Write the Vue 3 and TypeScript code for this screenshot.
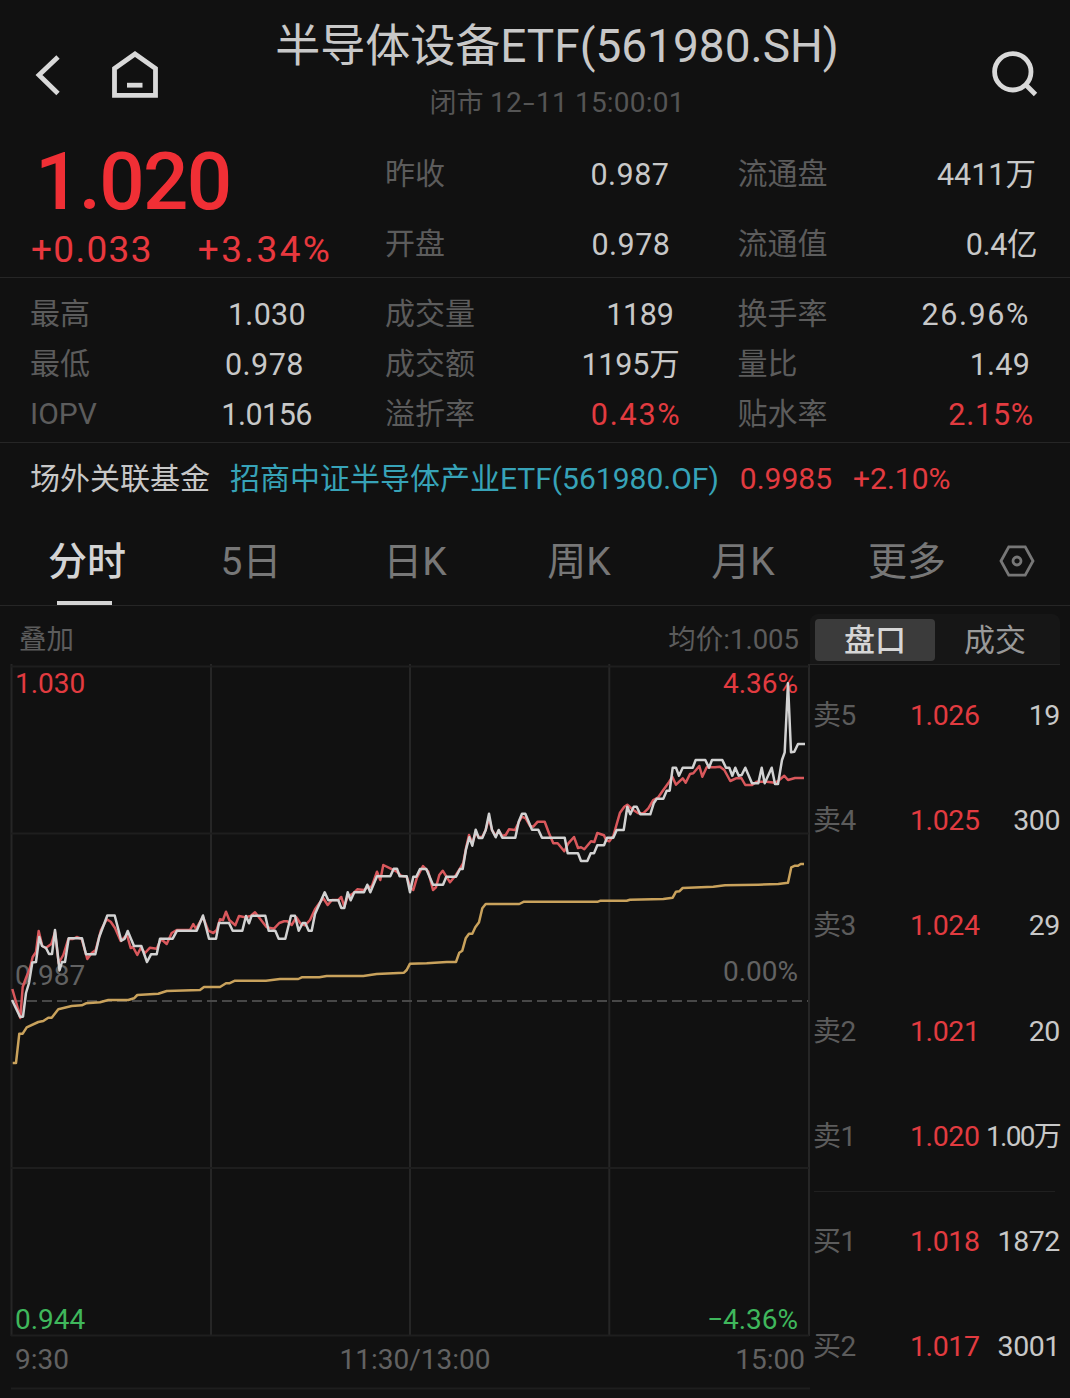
<script setup lang="ts">
interface Quote {
  label: string
  value: string
  /** distance between the value and the right edge of its column */
  inset: number
  /** letter spacing of the value */
  track: number
  up?: boolean
}

interface Order {
  label: string
  price: string
  volume: string
}

const summary: Quote[] = [
  { label: '昨收', value: '0.987', inset: 68, track: 0.5 },
  { label: '流通盘', value: '4411万', inset: 34, track: 0 },
  { label: '开盘', value: '0.978', inset: 67, track: 0.5 },
  { label: '流通值', value: '0.4亿', inset: 33, track: -0.4 },
]

const stats: Quote[] = [
  { label: '最高', value: '1.030', inset: 79, track: 0.3 },
  { label: '成交量', value: '1189', inset: 64, track: -0.3 },
  { label: '换手率', value: '26.96%', inset: 40, track: 1.6 },
  { label: '最低', value: '0.978', inset: 81, track: 0.5 },
  { label: '成交额', value: '1195万', inset: 58, track: -0.2 },
  { label: '量比', value: '1.49', inset: 40, track: 0.2 },
  { label: 'IOPV', value: '1.0156', inset: 73, track: -0.5 },
  { label: '溢折率', value: '0.43%', inset: 56, track: 1.8, up: true },
  { label: '贴水率', value: '2.15%', inset: 36, track: 0.8, up: true },
]

const tabs: string[] = ['分时', '5日', '日K', '周K', '月K', '更多']

const sells: Order[] = [
  { label: '卖5', price: '1.026', volume: '19' },
  { label: '卖4', price: '1.025', volume: '300' },
  { label: '卖3', price: '1.024', volume: '29' },
  { label: '卖2', price: '1.021', volume: '20' },
  { label: '卖1', price: '1.020', volume: '1.00万' },
]

const buys: Order[] = [
  { label: '买1', price: '1.018', volume: '1872' },
  { label: '买2', price: '1.017', volume: '3001' },
]

const priceLine =
  '12,1000 20,1016.7 23,1016.7 26,993 29,983 32.3,962.5 36,962 39.3,937 42,946 46,948 49,954 52,954 55,930 59.5,970.5 62,962 65,962 68.7,938.3 82,938.3 86,954.3 95.3,954.3 99.3,936.7 107.3,915.5 114.7,915.5 121.3,940.7 124.5,939 127.7,931 134,946 141.3,946 147,962 151,954.3 156.7,954.3 160,938.7 172.7,938.7 177,930.7 196.7,930.7 203,915.5 209,938.7 216,938.7 219,923 229,923 232.7,930.7 242.3,930.7 246,916 249,923.3 251.7,915.7 265.3,915.7 268.7,930.7 275.3,930.7 278.7,938.7 285.3,938.7 291,915.7 295,915.7 298.7,930.7 302.7,923 305.3,923 308.7,930.7 311.7,930.7 315,914 324.7,892.3 328.3,900.3 338.3,900.3 341.3,908 344.3,908 347.7,892.3 350.7,900.3 354.3,892.3 364,892.3 367.3,884.7 370.3,892.3 377,876.3 390.3,876.3 393.7,868.7 397,868.7 399.7,876.3 406.7,876.3 410,892.3 413.3,876.7 416.3,876.7 420,869 426.3,869 433,884.7 443,884.7 446.3,876.7 456,876.7 460,869 462.7,869 466,849.3 469.3,837.3 472.3,845.7 475.7,829.7 478.7,838 482.3,838 485.7,830 489,813.7 492,830 495.7,837.3 498.7,830 502.3,837.7 515.3,837.7 518.7,821.7 522,813.7 525.3,813.7 532,829.7 538.3,829.7 542,837.7 564.7,837.7 567.7,853.3 578,853.3 581,861 587.3,861 590.7,853.3 594,853.3 597.3,845.3 604,845.3 607,837.7 613.3,837.7 616.7,830 623.7,830 627.3,806.7 630.3,814.3 633.7,806.7 636.7,806.7 640.3,814.3 650.3,814.3 653.7,803.3 656.7,798.7 663.3,798.7 666.7,790.7 669.7,790.7 672.7,767.7 676,767.7 679,775.7 682.7,767.7 692.7,767.7 695.7,760 705.3,760 709,767.7 712,760 722.3,760 726,767.7 729.3,767.7 732.3,775.7 735.3,767.7 738.7,775.7 741.7,775 745.3,767.7 752,783.3 758.3,783.3 761.7,767.7 764.7,783.3 771.7,767.7 775,784 778,784 782,760 784.7,752.3 788,683.3 791,752.3 794.3,751.7 798,744 805,744'

const indexLine =
  '12.3,989 18.3,1010 20.3,1018 22.7,987 26,978 30,968 32.7,957 36,952 38.7,931 42.3,946 45.7,948 51.3,944 55,932 58.7,963 63.3,955 68.3,939 73,939 76.7,937 81.7,939 87.3,959 91.7,953 95.7,950 101,930 106.7,919.3 110.7,921.7 115,928 120.7,941 127,935 130.7,948 133,947 137.3,955 140.7,948 145,953 150,947.7 156.7,948.7 161,939 166.7,944 171.7,933 176.7,930 190,930 193.3,924 196,929 203,917 208.3,930.7 213.3,933 216.7,930 220,919.3 223,920 226,911.7 229.3,920 235.3,925.3 239,916 245,917.3 250.7,916 255,912.3 266.7,927.3 274,928.7 279.3,923 284,921.3 287.3,921.3 291.7,925 296.3,917.3 300.3,923.3 305,925.3 310,920 315,909.3 319.3,903.3 323.3,898.3 327.7,905 332,900 338.3,900 341.3,897 344.3,906.7 347.7,896.7 353.3,893.3 357.3,889.3 364,890 368.3,886.7 371.7,886.7 377,871.7 380.3,880 383.3,865 390.7,868.7 396.7,871.7 401,875.7 406.7,876.7 410.7,888 413.3,890 416.7,878.3 420,871.7 423,866 428.3,871.7 433,890 436,887.3 439.3,875 442.7,870.7 450,882.3 456,875 460.7,867.3 463.3,863 466.3,846.7 469,835 472.3,843.3 475.7,832.7 478.7,837 482.3,837 485.7,830 489,818 492,830 495.7,836 498.7,830.7 502.3,836 505.7,835 509,829.3 515,830 519,821.7 522,816.7 525.7,818.3 530,826 533.3,826.7 537.7,821.7 544.7,821.7 549,833.3 553.3,843.3 557.7,843.3 564.3,851.3 568.3,843.3 574,837 578,848 581,847.3 584.3,849.3 591,841.3 594.3,842 597.3,833 604,835.3 606,840 609.3,841.3 613.3,836 620,812.7 624.3,806.7 627.3,804.7 633.3,810 638.3,813.3 643.3,813.3 648.3,808.3 653.3,800 658.3,797.3 663.3,790 669.3,781.7 672.3,776.7 676,784.7 682.7,778.3 685.7,782.7 690,774 693.3,773.3 699.3,766 702.3,776.7 706.7,767.3 715,767.3 720,766.7 724.3,770 730.3,781 736,778.3 741.3,778 745.3,785 752,785 756.7,781.7 766.7,781.7 775,782.7 778.3,780.7 784.3,775.7 788,780 795,778 804,778'

const averageLine =
  '12.7,1063 16,1063 19.3,1033.7 22.7,1033.7 26.7,1027.3 38.3,1022 43.3,1021 48.3,1017.7 51.7,1017.7 58.3,1009.3 71.7,1006 81.7,1005.3 86,1003.3 100,1002.3 108.3,1000 128.3,1000 134,998.3 137.3,995 158.3,993.7 166.7,991 200,990 204,987 220,987 226,983.3 229.3,983.3 235,980.7 266,980.7 280,979 298.3,979 301.7,977.3 319.3,977.3 326.7,976 363.3,976 376.7,974 404,972.7 406.7,970 410,963.7 426.7,963.3 446.7,962 456,962 459.3,952.7 462.3,950.7 465.7,938.3 469,933.7 472.3,933.7 475.3,927.3 479,922.3 482.3,908.3 485.7,904 519.3,904 524,901.7 598,901.7 600.7,900.7 626.7,900.7 630,899.7 663.3,899 672.7,897.7 676,891.7 679.3,891.3 682.7,888 713.3,886.7 725,885.3 758.3,884.7 778.3,884 788,882.7 791.3,867.3 795,865.7 798,865.7 800.7,864 804,864'
</script>

<template>
  <main class="page">
    <header class="top">
      <nav class="nav">
        <svg class="back" width="28" height="48" viewBox="34 51 28 48">
          <path d="M58 57 39 75l19 18.500" />
        </svg>
        <svg class="home" width="50" height="52" viewBox="110 49 50 52">
          <path d="M114.500 95.300V68.500L135 54l20.500 14.500v26.800z" />
          <path d="M127 85.200h15.500" />
        </svg>
      </nav>
      <div class="heading">
        <h1>半导体设备<span>ETF(561980.SH)</span></h1>
        <p>闭市 <span>12<i>-</i>11 15:00:01</span></p>
      </div>
      <svg class="search" width="50" height="52" viewBox="990 49 50 52">
        <circle cx="1012.800" cy="71.800" r="18.200" />
        <path d="M1025.500 84.500 1035.500 94.500" />
      </svg>
    </header>

    <section class="summary">
      <div class="last">
        <strong>1.020</strong>
        <div class="change"><span>+0.033</span><span class="percent">+3.34%</span></div>
      </div>
      <dl class="summary-grid">
        <div v-for="q in summary" :key="q.label" class="quote">
          <dt>{{ q.label }}</dt>
          <dd :style="{ marginRight: q.inset + 'px', letterSpacing: q.track + 'px' }">{{ q.value }}</dd>
        </div>
      </dl>
    </section>

    <dl class="stats">
      <div v-for="q in stats" :key="q.label" class="quote">
        <dt>{{ q.label }}</dt>
        <dd :class="{ up: q.up }" :style="{ marginRight: q.inset + 'px', letterSpacing: q.track + 'px' }">{{ q.value }}</dd>
      </div>
    </dl>

    <section class="related">
      <span class="related-title">场外关联基金</span>
      <a>招商中证半导体产业ETF(561980.OF)</a>
      <span class="up nav-value">0.9985</span>
      <span class="up">+2.10%</span>
    </section>

    <nav class="tabs">
      <button v-for="(t, i) in tabs" :key="t" :class="{ active: i === 0 }">{{ t }}</button>
      <svg class="gear" width="38" height="36" viewBox="-19 -18 38 36">
        <path d="M-16 0-8.200-14.200H8.200L16 0 8.200 14.200H-8.200z" />
        <circle r="4" />
      </svg>
    </nav>

    <section class="board">
      <div class="chart">
        <div class="chart-head"><span>叠加</span><span>均价:1.005</span></div>
        <svg width="810" height="734" viewBox="0 664 810 734">
          <g class="grid">
            <path d="M11.500 664V1336M211 664V1336M410 664V1336M609.300 664V1336M809 664V1336" />
            <path d="M11 666.500H809M11 833.500H809M11 1168H809M11 1335.500H809M11 1388.500H810" class="row" />
          </g>
          <path class="base" d="M12 1001H808" />
          <text class="mute" x="15" y="985">0.987</text>
          <text class="mute end" x="798" y="981">0.00%</text>
          <text class="red" x="15" y="692.500">1.030</text>
          <text class="red end" x="798" y="692.500">4.36%</text>
          <text class="green" x="15" y="1329">0.944</text>
          <text class="green end" x="798" y="1329">−4.36%</text>
          <text class="mute" x="15" y="1369">9:30</text>
          <text class="mute mid" x="415" y="1369">11:30/13:00</text>
          <text class="mute end" x="805" y="1369">15:00</text>
          <polyline class="average" :points="averageLine" />
          <polyline class="index" :points="indexLine" />
          <polyline class="price" :points="priceLine" />
        </svg>
      </div>

      <aside class="book">
        <div class="switch">
          <button class="on">盘口</button>
          <button>成交</button>
        </div>
        <ul class="sells">
          <li v-for="o in sells" :key="o.label">
            <span class="side">{{ o.label }}</span>
            <span class="up">{{ o.price }}</span>
            <span class="vol" :class="{ tight: o.volume.endsWith('万') }">{{ o.volume }}</span>
          </li>
        </ul>
        <ul class="buys">
          <li v-for="o in buys" :key="o.label">
            <span class="side">{{ o.label }}</span>
            <span class="up">{{ o.price }}</span>
            <span class="vol">{{ o.volume }}</span>
          </li>
        </ul>
      </aside>
    </section>
  </main>
</template>

<style>
body {
  margin: 0;
  background: #111;
}
</style>

<style scoped>
.page {
  width: 1070px;
  height: 1398px;
  overflow: hidden;
  background: #111;
  color: #c8c8c8;
  font-family: Roboto, 'Noto Sans CJK SC', sans-serif;
  font-size: 30px;
}

h1,
p,
dl,
dd,
ul {
  margin: 0;
  padding: 0;
}

button {
  border: 0;
  padding: 0;
  background: none;
  color: inherit;
  font: inherit;
}

svg {
  display: block;
  fill: none;
}

.up {
  color: #e23b40;
}

.top {
  display: flex;
  height: 140px;
  align-items: flex-start;
}

.nav {
  display: flex;
  gap: 48px;
  width: 243px;
  padding: 51px 0 0 34px;
  box-sizing: border-box;
}

.back path,
.home path,
.search {
  stroke: #d9d9d9;
  stroke-width: 4.8;
}

.home {
  margin-top: -2px;
}

.heading {
  width: 628px;
  text-align: center;
}

.heading h1 {
  margin-top: 18px;
  font-size: 45px;
  font-weight: 400;
  line-height: 56px;
  white-space: nowrap;
}

.heading h1 span {
  font-size: 46px;
}

.heading p {
  margin-top: 10px;
  color: #555;
  font-size: 27px;
  line-height: 36px;
}

.heading p span {
  font-size: 28px;
  letter-spacing: 0.2px;
}

.heading i {
  display: inline-block;
  font-style: normal;
  transform: scaleX(1.5);
  width: 14px;
}

.search {
  margin: 49px 0 0 119px;
}

.summary {
  display: flex;
  height: 137px;
  border-bottom: 1px solid #262626;
}

.last {
  width: 354px;
  padding-left: 31px;
}

.last strong {
  display: block;
  height: 84px;
  padding-left: 4px;
  color: #f02f35;
  font-size: 80px;
  font-weight: 500;
  line-height: 84px;
  letter-spacing: -1.7px;
}

.change {
  display: flex;
  gap: 45px;
  color: #e8383e;
  font-size: 37px;
  line-height: 52px;
  letter-spacing: 1.3px;
}

.percent {
  letter-spacing: 2.4px;
}

.summary-grid {
  display: grid;
  width: 685px;
  grid-template-columns: 352.5px 332.5px;
  grid-auto-rows: 70px;
  margin-top: -1px;
}

.quote {
  display: flex;
  justify-content: space-between;
  align-items: center;
}

.quote dt {
  color: #5c5c5c;
  font-size: 30px;
  line-height: 40px;
}

.quote dd {
  padding-top: 2px;
  font-size: 30.5px;
  line-height: 40px;
}

.stats {
  display: grid;
  height: 165px;
  grid-template-columns: 355px 352.5px 332.5px;
  grid-auto-rows: 50px;
  box-sizing: border-box;
  padding: 11px 0 0 30px;
  border-bottom: 1px solid #262626;
}

.related {
  display: flex;
  height: 74px;
  padding-left: 30px;
  line-height: 71px;
  white-space: nowrap;
}

.related a {
  margin-left: 20px;
  color: #37a3b8;
}

.nav-value {
  margin: 0 21px;
}

.tabs {
  display: flex;
  height: 88px;
  padding-left: 5px;
  border-bottom: 1px solid #262626;
  color: #777;
  font-size: 39px;
}

.tabs button {
  position: relative;
  width: 164px;
  height: 88px;
  line-height: 90px;
}

.tabs .active {
  color: #d4d4d4;
  font-weight: 500;
}

.tabs .active::after {
  content: '';
  position: absolute;
  left: 52px;
  bottom: 0;
  width: 55px;
  height: 4px;
  background: #d4d4d4;
}

.gear {
  margin: 26px 0 0 9px;
  stroke: #777;
  stroke-width: 2.8;
}

.board {
  display: flex;
}

.chart {
  width: 810px;
}

.chart-head {
  display: flex;
  height: 58px;
  justify-content: space-between;
  padding: 0 11px 0 19px;
  color: #5c5c5c;
  font-size: 27.5px;
  line-height: 68px;
}

.grid path {
  stroke: #262626;
  stroke-width: 2;
}

.grid .row {
  stroke: #1e1e1e;
}

.base {
  stroke: #484848;
  stroke-width: 2;
  stroke-dasharray: 10 5;
}

text {
  font-size: 28px;
}

.mute {
  fill: #626262;
}

.red {
  fill: #e23b40;
}

.green {
  fill: #3fb75c;
}

.end {
  text-anchor: end;
}

.mid {
  text-anchor: middle;
}

polyline {
  stroke-width: 2.5;
  stroke-linejoin: round;
}

.average {
  stroke: #c9a25c;
}

.index {
  stroke: #d9585c;
}

.price {
  stroke: #d2d2d2;
}

.book {
  width: 260px;
}

.switch {
  display: flex;
  width: 250px;
  height: 51px;
  box-sizing: border-box;
  margin-top: 8px;
  padding: 5px 4px 4px 5px;
  border-bottom: 1px solid #262626;
  border-radius: 8px 8px 0 0;
  background: #161616;
  color: #999;
  font-size: 31px;
}

.switch button {
  width: 120px;
  height: 42px;
  border-radius: 4px;
  line-height: 44px;
}

.switch .on {
  background: #3b3b3b;
  color: #d6d6d6;
  font-weight: 500;
}

.book ul {
  list-style: none;
}

.book li {
  display: flex;
  height: 105.4px;
  align-items: center;
  padding: 0 10px 0 3px;
  font-size: 28.5px;
  letter-spacing: -0.4px;
  line-height: 40px;
  white-space: nowrap;
}

.side {
  width: 97px;
  flex: none;
  color: #5c5c5c;
  font-size: 28px;
}

.vol {
  flex: 1;
  text-align: right;
}

.tight {
  font-size: 28px;
  letter-spacing: -1.7px;
}

.sells {
  height: 528px;
  border-bottom: 1px solid #202020;
  margin: -2px 15px 0 4px;
}

.sells li {
  margin: 0 -15px 0 -4px;
}

.buys {
  margin-top: -3px;
}
</style>
